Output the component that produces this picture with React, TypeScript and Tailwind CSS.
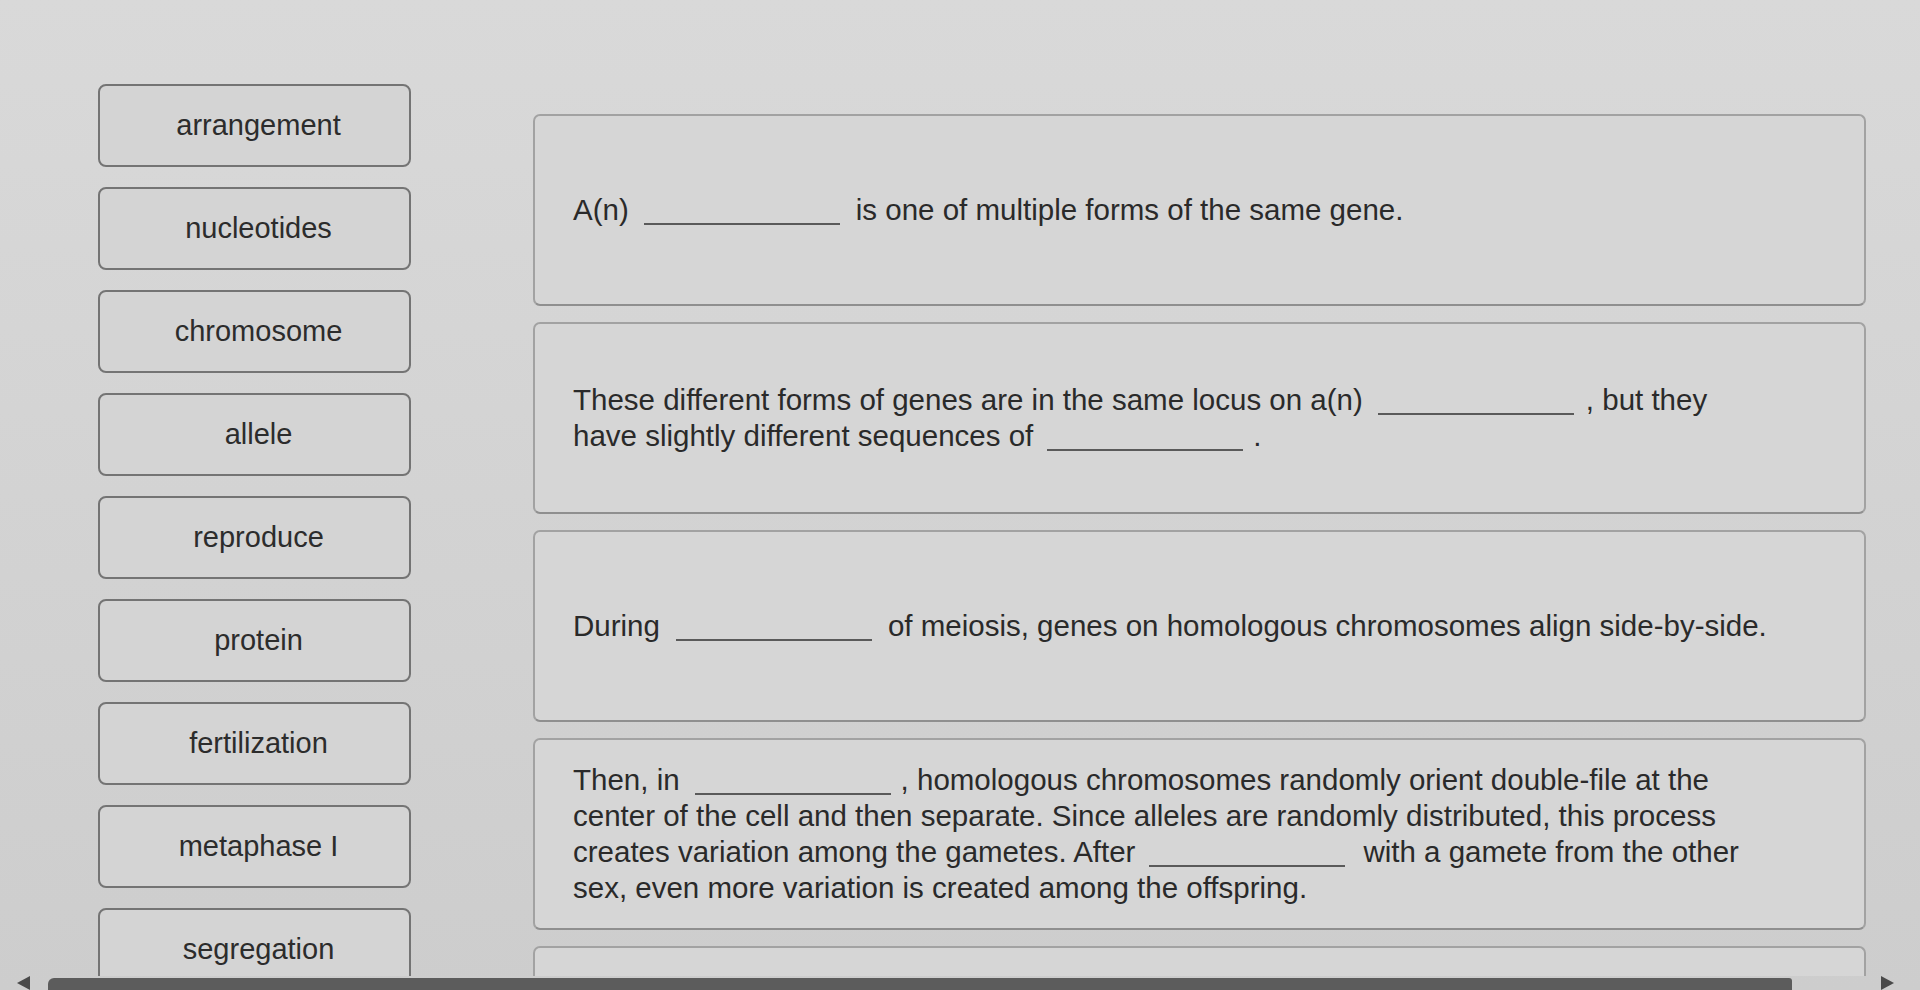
import type { ReactNode } from "react";

const words = [
  "arrangement",
  "nucleotides",
  "chromosome",
  "allele",
  "reproduce",
  "protein",
  "fertilization",
  "metaphase I",
  "segregation",
];

function Blank({ className = "mx-[14px]" }: { className?: string }) {
  return <span className={`inline-block w-[196px] h-[1em] border-b-2 border-[#5a5a5a] mb-[-5px] ${className}`} />;
}

function WordTile({ label }: { label: string }) {
  return (
    <div className="h-[83px] shrink-0 rounded-[8px] border-2 border-[#747474] bg-[#d4d4d4] flex items-center justify-center pl-[8px] text-[29px] text-[#2c2c2c]">
      {label}
    </div>
  );
}

function Card({ children }: { children?: ReactNode }) {
  return (
    <div className="h-[192px] shrink-0 rounded-[7px] border-2 border-[#a2a2a2] border-b-[#8f8f8f] bg-[#d6d6d6] flex items-center pl-[38px] pr-[40px]">
      <div className="text-[29.5px] leading-[36px] text-[#2a2a2a]">{children}</div>
    </div>
  );
}

export default function App() {
  return (
    <div className="h-[990px] w-[1920px] overflow-hidden flex flex-col bg-gradient-to-b from-[#d9d9d9] to-[#cdcdcd] font-['Liberation_Sans',Arial,sans-serif]">
      <div className="flex-1 min-h-0 overflow-hidden flex">
        <div className="w-[313px] ml-[98px] pt-[84px] flex flex-col gap-[20px]">
          {words.map((w) => (
            <WordTile key={w} label={w} />
          ))}
        </div>
        <div className="w-[1333px] ml-[122px] pt-[114px] flex flex-col gap-[16px]">
          <Card>
            A(n)
            <Blank className="ml-[15px] mr-[16px]" />
            is one of multiple forms of the same gene.
          </Card>
          <Card>
            These different forms of genes are in the same locus on a(n)
            <Blank className="ml-[15px] mr-[12px]" />, but they
            <br />
            have slightly different sequences of
            <Blank className="ml-[14px] mr-[10px]" />.
          </Card>
          <Card>
            During
            <Blank className="ml-[16px] mr-[16px]" />
            of meiosis, genes on homologous chromosomes align side-by-side.
          </Card>
          <Card>
            Then, in
            <Blank className="ml-[15px] mr-[10px]" />, homologous chromosomes randomly orient double-file at the
            <br />
            center of the cell and then separate. Since alleles are randomly distributed, this process
            <br />
            creates variation among the gametes. After
            <Blank className="ml-[14px] mr-[18px]" />
            with a gamete from the other
            <br />
            sex, even more variation is created among the offspring.
          </Card>
          <Card />
        </div>
      </div>
      <div className="h-[14px] shrink-0 flex items-end">
        <div className="ml-[17px] w-0 h-0 border-y-[7px] border-y-transparent border-r-[13px] border-r-[#4a4a4a]" />
        <div className="ml-[18px] w-[1744px] h-[12px] rounded-tl-[6px] rounded-tr-[3px] bg-[#5c5c5c]" />
        <div className="ml-[89px] w-0 h-0 border-y-[7px] border-y-transparent border-l-[13px] border-l-[#4a4a4a]" />
      </div>
    </div>
  );
}
